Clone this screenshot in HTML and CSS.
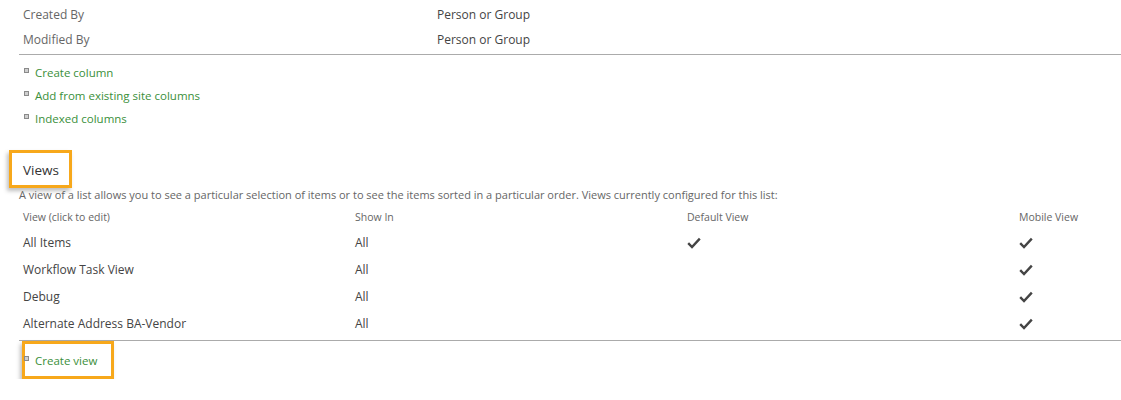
FILE: index.html
```html
<!DOCTYPE html>
<html>
<head>
<meta charset="utf-8">
<link rel="stylesheet" href="styles.css">
</head>
<body>
<div class="page">
  <div class="fields">
    <div class="frow"><span class="fname">Created By</span><span class="ftype">Person or Group</span></div>
    <div class="frow"><span class="fname">Modified By</span><span class="ftype">Person or Group</span></div>
  </div>
  <ul class="links">
    <li><span class="bullet"></span><a href="#">Create column</a></li>
    <li><span class="bullet"></span><a href="#">Add from existing site columns</a></li>
    <li><span class="bullet"></span><a href="#">Indexed columns</a></li>
  </ul>
  <div class="section">
    <h2 class="title hl">Views</h2>
    <p class="desc">A view of a list allows you to see a particular selection of items or to see the items sorted in a particular order. Views currently configured for this list:</p>
    <div class="views">
      <div class="vrow head"><span>View (click to edit)</span><span>Show In</span><span>Default View</span><span>Mobile View</span></div>
      <div class="vrow"><span>All Items</span><span>All</span><span class="chk"><svg width="14" height="12" viewBox="0 0 14 12"><path d="M1.2 6.2 L5 10 L12.8 1.6" fill="none" stroke="#444" stroke-width="2.4"/></svg></span><span class="chk"><svg width="14" height="12" viewBox="0 0 14 12"><path d="M1.2 6.2 L5 10 L12.8 1.6" fill="none" stroke="#444" stroke-width="2.4"/></svg></span></div>
      <div class="vrow"><span>Workflow Task View</span><span>All</span><span></span><span class="chk"><svg width="14" height="12" viewBox="0 0 14 12"><path d="M1.2 6.2 L5 10 L12.8 1.6" fill="none" stroke="#444" stroke-width="2.4"/></svg></span></div>
      <div class="vrow"><span>Debug</span><span>All</span><span></span><span class="chk"><svg width="14" height="12" viewBox="0 0 14 12"><path d="M1.2 6.2 L5 10 L12.8 1.6" fill="none" stroke="#444" stroke-width="2.4"/></svg></span></div>
      <div class="vrow"><span>Alternate Address BA-Vendor</span><span>All</span><span></span><span class="chk"><svg width="14" height="12" viewBox="0 0 14 12"><path d="M1.2 6.2 L5 10 L12.8 1.6" fill="none" stroke="#444" stroke-width="2.4"/></svg></span></div>
    </div>
    <div class="create">
      <div class="hl hl2"><span class="bullet"></span><a href="#">Create view</a></div>
    </div>
  </div>
</div>
</body>
</html>
```
FILE: styles.css
```css
html, body { margin: 0; padding: 0; background: #fff; }
body { font-family: "Open Sans", "Noto Sans", sans-serif; color: #444; }
.page { padding-left: 19px; }
.fields { border-bottom: 1px solid #ababab; padding-top: 2px; padding-bottom: 2px; }
.frow { display: grid; grid-template-columns: 414px 1fr; height: 25px; align-items: center; font-size: 12px; }
.frow span { padding-left: 4px; }
.fname { color: #666; }
.ftype { color: #444; }
.links { list-style: none; margin: 6px 0 0 0; padding: 0; }
.links li { display: flex; align-items: center; height: 23px; font-size: 11.5px; }
.bullet { display: inline-block; width: 3px; height: 3px; border: 1px solid #8a8a8a; background: #cfcfcf; margin: 0 6px 0 5px; position: relative; top: -2px; }
a { color: #3a8f3a; text-decoration: none; }
.section { margin-top: 20px; }
.title { font-size: 13.5px; font-weight: normal; color: #333; margin: 0 0 0 -10px; display: inline-block; padding: 8px 10px 6px 11px; }
.hl { border: 3px solid #f7a81b; box-shadow: -2px 3px 4px rgba(0,0,0,0.25); }
.desc { margin: 0; font-size: 11px; color: #666; height: 14px; line-height: 14px; }
.views { border-bottom: 1px solid #ababab; padding-bottom: 3px; }
.vrow { display: grid; grid-template-columns: 332px 332px 332px 1fr; height: 27px; align-items: center; font-size: 12px; color: #444; }
.vrow span { padding-left: 4px; }
.vrow.head { height: 24px; margin-top: 3px; font-size: 10.5px; color: #666; }
.chk { display: flex; align-items: center; }
.create { display: flex; padding-left: 3px; }
.hl2 { display: flex; align-items: center; width: 86px; height: 32px; font-size: 11.5px; }
.hl2 .bullet { margin: 0 6px 0 -1px; }
```
